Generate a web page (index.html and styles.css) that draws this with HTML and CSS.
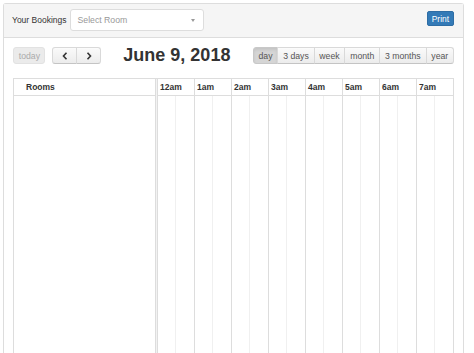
FILE: index.html
```html
<!DOCTYPE html>
<html lang="en">
<head>
    <meta charset="UTF-8">
    <meta name="viewport" content="width=device-width, initial-scale=1.0">
    <title>Room Bookings</title>
    <link rel="stylesheet" href="styles.css">
</head>
<body>
    <div class="panel">
        <div class="panel-heading">
            <div class="bookings">
                <span class="bookings-label">Your Bookings</span>
                <div class="room-select">
                    <span>Select Room</span>
                    <span class="caret"></span>
                </div>
            </div>
            <button class="btn-print">Print</button>
        </div>
        <div class="panel-body">
            <div class="toolbar">
                <div class="toolbar-left">
                    <button class="fc-btn today" disabled>today</button>
                    <div class="btn-group">
                        <button class="fc-btn arrow">
                            <svg width="6" height="8" viewBox="0 0 6 8"><polyline points="4.5,0.8 1.5,4 4.5,7.2" fill="none" stroke="#333" stroke-width="1.6"/></svg>
                        </button>
                        <button class="fc-btn arrow">
                            <svg width="6" height="8" viewBox="0 0 6 8"><polyline points="1.5,0.8 4.5,4 1.5,7.2" fill="none" stroke="#333" stroke-width="1.6"/></svg>
                        </button>
                    </div>
                </div>
                <h2 class="title">June 9, 2018</h2>
                <div class="btn-group views">
                    <button class="fc-btn active">day</button>
                    <button class="fc-btn">3 days</button>
                    <button class="fc-btn">week</button>
                    <button class="fc-btn">month</button>
                    <button class="fc-btn">3 months</button>
                    <button class="fc-btn">year</button>
                </div>
            </div>
            <div class="timeline">
                <div class="resource-area">
                    <div class="res-head">Rooms</div>
                    <div class="res-body"></div>
                </div>
                <div class="divider"></div>
                <div class="time-area">
                    <div class="time-head">
                        <div class="hour">12am</div>
                        <div class="hour">1am</div>
                        <div class="hour">2am</div>
                        <div class="hour">3am</div>
                        <div class="hour">4am</div>
                        <div class="hour">5am</div>
                        <div class="hour">6am</div>
                        <div class="hour">7am</div>
                    </div>
                    <div class="time-body">
                        <div class="slot"></div><div class="slot major"></div>
                        <div class="slot"></div><div class="slot major"></div>
                        <div class="slot"></div><div class="slot major"></div>
                        <div class="slot"></div><div class="slot major"></div>
                        <div class="slot"></div><div class="slot major"></div>
                        <div class="slot"></div><div class="slot major"></div>
                        <div class="slot"></div><div class="slot major"></div>
                        <div class="slot"></div><div class="slot major"></div>
                    </div>
                </div>
            </div>
        </div>
    </div>
</body>
</html>
```

FILE: styles.css
```css
html, body {
    height: 100%;
    overflow: hidden;
}
body {
    box-sizing: border-box;
    margin: 0;
    padding: 3px 0 0 3px;
    font-family: "Liberation Sans", Arial, sans-serif;
    font-size: 8.7px;
    color: #333;
    background: #fff;
}
.panel {
    box-sizing: border-box;
    width: 461px;
    height: 100%;
    border: 1px solid #ddd;
    border-bottom: none;
    border-radius: 3px 3px 0 0;
    display: flex;
    flex-direction: column;
}
.panel-heading {
    height: 33px;
    flex-shrink: 0;
    background: #f5f5f5;
    border-bottom: 1px solid #ddd;
    display: flex;
    align-items: center;
    justify-content: space-between;
    padding: 0 9px 0 8px;
}
.bookings {
    display: flex;
    align-items: center;
    gap: 3px;
    margin-top: -1px;
}
.bookings-label {
    font-size: 8.5px;
    color: #333;
}
.room-select {
    width: 118px;
    height: 20px;
    padding: 0 7px;
    background: #fff;
    border: 1px solid #ddd;
    border-radius: 3px;
    display: flex;
    align-items: center;
    justify-content: space-between;
    color: #999;
}
.caret {
    width: 0;
    height: 0;
    border-top: 3px solid #999;
    border-left: 2.5px solid transparent;
    border-right: 2.5px solid transparent;
    margin-right: 1px;
}
.btn-print {
    height: 15px;
    padding: 0 4px;
    margin-top: -4px;
    font-family: inherit;
    font-size: 8.4px;
    color: #fff;
    background: #337ab7;
    border: 1px solid #2e6da4;
    border-radius: 2px;
}
.panel-body {
    flex: 1;
    min-height: 0;
    padding: 9px 9px 0 9px;
    display: flex;
    flex-direction: column;
}
.toolbar {
    display: flex;
    align-items: center;
    justify-content: space-between;
    height: 17px;
    flex-shrink: 0;
}
.toolbar-left {
    display: flex;
    gap: 7px;
}
.btn-group {
    display: flex;
}
.fc-btn {
    height: 17px;
    padding: 0 4.8px;
    font-family: inherit;
    font-size: 8.7px;
    color: #555;
    background: linear-gradient(#fafafa, #ececec);
    border: 1px solid #d9d9d9;
    border-bottom-color: #c4c4c4;
    border-radius: 0;
    box-shadow: inset 0 1px 0 rgba(255, 255, 255, 0.3);
}
.btn-group .fc-btn + .fc-btn {
    margin-left: -1px;
}
.btn-group .fc-btn:first-child {
    border-radius: 3px 0 0 3px;
}
.btn-group .fc-btn:last-child {
    border-radius: 0 3px 3px 0;
}
.fc-btn.today {
    width: 32px;
    color: #aaa;
    background: #ebebeb;
    border-color: #e2e2e2;
    border-radius: 3px;
    box-shadow: none;
}
.fc-btn.arrow {
    width: 25px;
    display: flex;
    align-items: center;
    justify-content: center;
}
.fc-btn.active {
    background: #d5d5d5;
    border-color: #c8c8c8;
    box-shadow: inset 0 2px 3px rgba(0, 0, 0, 0.08);
}
.title {
    margin: 0;
    font-size: 18px;
    font-weight: bold;
    color: #333;
}
.timeline {
    margin-top: 14px;
    flex: 1;
    display: flex;
    border: 1px solid #ddd;
    border-bottom: none;
}
.resource-area {
    width: 141px;
    flex-shrink: 0;
    display: flex;
    flex-direction: column;
}
.res-head {
    height: 16px;
    border-bottom: 1px solid #ddd;
    padding-left: 12px;
    font-size: 8.5px;
    font-weight: bold;
    line-height: 16px;
}
.divider {
    width: 1px;
    flex-shrink: 0;
    background: #f2f2f2;
    border-left: 1px solid #ddd;
    border-right: 1px solid #ddd;
}
.time-area {
    flex: 1;
    display: flex;
    flex-direction: column;
}
.time-head {
    display: flex;
    height: 16px;
    border-bottom: 1px solid #ddd;
}
.hour {
    width: 34px;
    padding-left: 2px;
    border-right: 1px solid #ddd;
    font-size: 8.5px;
    font-weight: bold;
    line-height: 16px;
}
.time-body {
    flex: 1;
    display: flex;
}
.slot {
    width: 17px;
    border-right: 1px solid #f0f0f0;
}
.slot.major {
    width: 18px;
    border-right-color: #ddd;
}
```
